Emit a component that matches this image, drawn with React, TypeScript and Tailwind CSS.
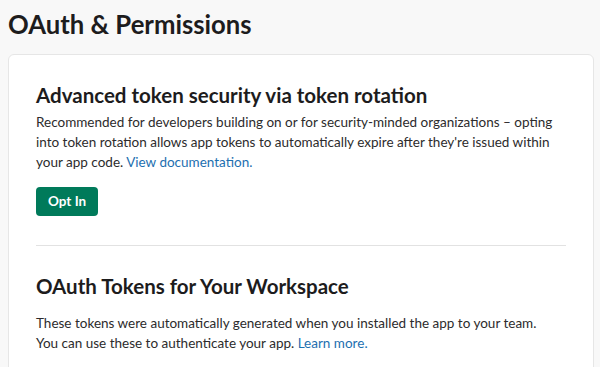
export default function App() {
  return (
    <div className="min-h-screen bg-[#f8f8f8] font-['Lato',sans-serif] text-[#1d1c1d] overflow-hidden h-[367px]">
      <div className="pl-[8px] pr-[6px] pt-[6px]">
        <h1 className="text-[25.7px] font-bold leading-[37px]">OAuth &amp; Permissions</h1>

        <div className="mt-[11px] bg-white border border-[#e6e6e6] rounded-[6px] px-[27px] pt-[26px] pb-[40px]">
          {/* Token rotation */}
          <section>
            <h2 className="text-[20.5px] font-bold leading-[28px]">Advanced token security via token rotation</h2>
            <p className="mt-[3px] text-[13.5px] leading-[20px] text-[#2c2b2c]">
              Recommended for developers building on or for security-minded organizations – opting
              <br />
              into token rotation allows app tokens to automatically expire after they're issued within
              <br />
              your app code. <a className="text-[#1d6fb0]">View documentation.</a>
            </p>
            <button className="mt-[15px] h-[29px] px-[12px] rounded-[4px] bg-[#007a5a] text-white text-[13.5px] font-bold">
              Opt In
            </button>
          </section>

          <div className="mt-[29px] border-t border-[#e2e2e2]" />

          {/* Workspace tokens */}
          <section className="mt-[26px]">
            <h2 className="text-[20.5px] font-bold leading-[28px]">OAuth Tokens for Your Workspace</h2>
            <p className="mt-[13px] text-[13.5px] leading-[20px] text-[#2c2b2c]">
              These tokens were automatically generated when you installed the app to your team.
              <br />
              You can use these to authenticate your app. <a className="text-[#1d6fb0]">Learn more.</a>
            </p>
          </section>
        </div>
      </div>
    </div>
  );
}
